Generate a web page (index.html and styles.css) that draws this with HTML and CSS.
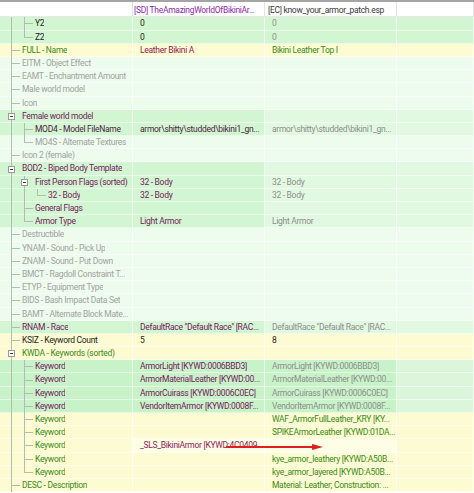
FILE: index.html
```html
<!DOCTYPE html>
<html>
<head>
<meta charset="utf-8">
<link rel="stylesheet" href="styles.css">
</head>
<body>
<div class="view">
  <div class="topbar"></div>
  <div class="head">
    <div class="c1"></div>
    <div class="c2 h-sd">[SD] TheAmazingWorldOfBikiniAr...</div>
    <div class="c3 h-ec">[EC] know_your_armor_patch.esp</div>
    <div class="c4"></div>
  </div>

  <div class="row g"><div class="c1"><span class="s v"></span><span class="o t"></span><span class="lbl k">Y2</span></div><div class="c2 k">0</div><div class="c3 gy">0</div><div class="c4"></div></div>
  <div class="row g"><div class="c1"><span class="s v"></span><span class="o l"></span><span class="lbl k">Z2</span></div><div class="c2 k">0</div><div class="c3 gy">0</div><div class="c4"></div></div>
  <div class="row y"><div class="c1"><span class="o t"></span><span class="lbl gr">FULL - Name</span></div><div class="c2 mr">Leather Bikini A</div><div class="c3 gr">Bikini Leather Top I</div><div class="c4"></div></div>
  <div class="row p"><div class="c1"><span class="o t"></span><span class="lbl gy">EITM - Object Effect</span></div><div class="c2"></div><div class="c3"></div><div class="c4"></div></div>
  <div class="row p"><div class="c1"><span class="o t"></span><span class="lbl gy">EAMT - Enchantment Amount</span></div><div class="c2"></div><div class="c3"></div><div class="c4"></div></div>
  <div class="row p"><div class="c1"><span class="o t"></span><span class="lbl gy">Male world model</span></div><div class="c2"></div><div class="c3"></div><div class="c4"></div></div>
  <div class="row p"><div class="c1"><span class="o t"></span><span class="lbl gy">Icon</span></div><div class="c2"></div><div class="c3"></div><div class="c4"></div></div>
  <div class="row g"><div class="c1"><span class="o x"><span class="box"></span></span><span class="lbl pu">Female world model</span></div><div class="c2"></div><div class="c3 lt"></div><div class="c4 lt"></div></div>
  <div class="row g"><div class="c1"><span class="s v"></span><span class="o t"></span><span class="lbl dp">MOD4 - Model FileName</span></div><div class="c2 dp">armor\shitty\studded\bikini1_gn...</div><div class="c3 lt gy">armor\shitty\studded\bikini1_gn...</div><div class="c4 lt"></div></div>
  <div class="row p"><div class="c1"><span class="s v"></span><span class="o l"></span><span class="lbl gy">MO4S - Alternate Textures</span></div><div class="c2"></div><div class="c3"></div><div class="c4"></div></div>
  <div class="row p"><div class="c1"><span class="o t"></span><span class="lbl gy">Icon 2 (female)</span></div><div class="c2"></div><div class="c3"></div><div class="c4"></div></div>
  <div class="row g"><div class="c1"><span class="o x"><span class="box"></span></span><span class="lbl pu">BOD2 - Biped Body Template</span></div><div class="c2"></div><div class="c3 lt"></div><div class="c4 lt"></div></div>
  <div class="row g"><div class="c1"><span class="s v"></span><span class="o x"><span class="box"></span></span><span class="lbl pu">First Person Flags (sorted)</span></div><div class="c2 pu">32 - Body</div><div class="c3 lt gy">32 - Body</div><div class="c4 lt"></div></div>
  <div class="row g"><div class="c1"><span class="s v"></span><span class="s v"></span><span class="o l"></span><span class="lbl pu">32 - Body</span></div><div class="c2 pu">32 - Body</div><div class="c3 lt gy">32 - Body</div><div class="c4 lt"></div></div>
  <div class="row g"><div class="c1"><span class="s v"></span><span class="o t"></span><span class="lbl pu">General Flags</span></div><div class="c2"></div><div class="c3 lt"></div><div class="c4 lt"></div></div>
  <div class="row g"><div class="c1"><span class="s v"></span><span class="o l"></span><span class="lbl pu">Armor Type</span></div><div class="c2 pu">Light Armor</div><div class="c3 lt gy">Light Armor</div><div class="c4 lt"></div></div>
  <div class="row p"><div class="c1"><span class="o t"></span><span class="lbl gy">Destructible</span></div><div class="c2"></div><div class="c3"></div><div class="c4"></div></div>
  <div class="row p"><div class="c1"><span class="o t"></span><span class="lbl gy">YNAM - Sound - Pick Up</span></div><div class="c2"></div><div class="c3"></div><div class="c4"></div></div>
  <div class="row p"><div class="c1"><span class="o t"></span><span class="lbl gy">ZNAM - Sound - Put Down</span></div><div class="c2"></div><div class="c3"></div><div class="c4"></div></div>
  <div class="row p"><div class="c1"><span class="o t"></span><span class="lbl gy">BMCT - Ragdoll Constraint T...</span></div><div class="c2"></div><div class="c3"></div><div class="c4"></div></div>
  <div class="row p"><div class="c1"><span class="o t"></span><span class="lbl gy">ETYP - Equipment Type</span></div><div class="c2"></div><div class="c3"></div><div class="c4"></div></div>
  <div class="row p"><div class="c1"><span class="o t"></span><span class="lbl gy">BIDS - Bash Impact Data Set</span></div><div class="c2"></div><div class="c3"></div><div class="c4"></div></div>
  <div class="row p"><div class="c1"><span class="o t"></span><span class="lbl gy">BAMT - Alternate Block Mate...</span></div><div class="c2"></div><div class="c3"></div><div class="c4"></div></div>
  <div class="row g"><div class="c1"><span class="o t"></span><span class="lbl pu">RNAM - Race</span></div><div class="c2 pu">DefaultRace "Default Race" [RAC...</div><div class="c3 lt gy">DefaultRace "Default Race" [RAC...</div><div class="c4 lt"></div></div>
  <div class="row y"><div class="c1"><span class="o t"></span><span class="lbl k">KSIZ - Keyword Count</span></div><div class="c2 k">5</div><div class="c3 k">8</div><div class="c4"></div></div>
  <div class="row y"><div class="c1"><span class="o x"><span class="box"></span></span><span class="lbl gr">KWDA - Keywords (sorted)</span></div><div class="c2"></div><div class="c3"></div><div class="c4"></div></div>
  <div class="row kg"><div class="c1"><span class="s v"></span><span class="o t"></span><span class="lbl pu">Keyword</span></div><div class="c2 pu">ArmorLight [KYWD:0006BBD3]</div><div class="c3 gy">ArmorLight [KYWD:0006BBD3]</div><div class="c4 lt"></div></div>
  <div class="row kg"><div class="c1"><span class="s v"></span><span class="o t"></span><span class="lbl pu">Keyword</span></div><div class="c2 pu">ArmorMaterialLeather [KYWD:00...</div><div class="c3 gy">ArmorMaterialLeather [KYWD:00...</div><div class="c4 lt"></div></div>
  <div class="row kg"><div class="c1"><span class="s v"></span><span class="o t"></span><span class="lbl pu">Keyword</span></div><div class="c2 pu">ArmorCuirass [KYWD:0006C0EC]</div><div class="c3 gy">ArmorCuirass [KYWD:0006C0EC]</div><div class="c4 lt"></div></div>
  <div class="row kg"><div class="c1"><span class="s v"></span><span class="o t"></span><span class="lbl pu">Keyword</span></div><div class="c2 pu">VendorItemArmor [KYWD:0008F...</div><div class="c3 gy">VendorItemArmor [KYWD:0008F...</div><div class="c4 lt"></div></div>
  <div class="row y"><div class="c1"><span class="s v"></span><span class="o t"></span><span class="lbl gr">Keyword</span></div><div class="c2"></div><div class="c3 gr">WAF_ArmorFullLeather_KRY [KY...</div><div class="c4"></div></div>
  <div class="row y"><div class="c1"><span class="s v"></span><span class="o t"></span><span class="lbl gr">Keyword</span></div><div class="c2"></div><div class="c3 gr">SPIKEArmorLeather [KYWD:01DA...</div><div class="c4"></div></div>
  <div class="row y"><div class="c1"><span class="s v"></span><span class="o t"></span><span class="lbl gr">Keyword</span></div><div class="c2 mr wy">_SLS_BikiniArmor [KYWD:4C0409...</div><div class="c3 wy"></div><div class="c4"></div></div>
  <div class="row y"><div class="c1"><span class="s v"></span><span class="o t"></span><span class="lbl gr">Keyword</span></div><div class="c2"></div><div class="c3 gr">kye_armor_leathery [KYWD:A50B...</div><div class="c4"></div></div>
  <div class="row y"><div class="c1"><span class="s v"></span><span class="o l"></span><span class="lbl gr">Keyword</span></div><div class="c2"></div><div class="c3 gr">kye_armor_layered [KYWD:A50B...</div><div class="c4"></div></div>
  <div class="row y"><div class="c1"><span class="o t"></span><span class="lbl gr">DESC - Description</span></div><div class="c2"></div><div class="c3 gr">Material: Leather; Construction: ...</div><div class="c4"></div></div>

  <svg class="arrow" width="100" height="10" viewBox="0 0 100 10">
    <line x1="0" y1="5" x2="88" y2="5" stroke="#e0201c" stroke-width="2"/>
    <polygon points="86,2 97,5 86,8" fill="#e0201c"/>
  </svg>
</div>
</body>
</html>
```

FILE: styles.css
```css
html, body {
  margin: 0;
  padding: 0;
  background: #ffffff;
}
body {
  width: 474px;
  height: 493px;
  overflow: hidden;
  font-family: Roboto, Lato, sans-serif;
  font-size: 8.5px;
  letter-spacing: -0.3px;
}
.view {
  position: relative;
  width: 474px;
}
.topbar {
  height: 2px;
  background: #a4a4a4;
}
.head {
  display: flex;
  height: 15.4px;
  line-height: 15px;
  background: #ffffff;
  border-bottom: 1px solid #e8e8e8;
  box-sizing: border-box;
}
.head > div {
  border-right: 1px solid #e3e3e3;
  box-sizing: border-box;
  white-space: nowrap;
  overflow: hidden;
  padding-top: 1px;
}
.head .c2 { padding-left: 1px; }
.head .c3 { padding-left: 3px; }
.h-sd { color: #8a2aa4; }
.h-ec { color: #3a3a3a; }

.row {
  display: flex;
  height: 13.2px;
  line-height: 13.2px;
  box-shadow: inset 0 -1px 0 rgba(255,255,255,0.55);
}
.row > div {
  box-sizing: border-box;
  border-right: 1px solid rgba(255,255,255,0.7);
  white-space: nowrap;
  overflow: hidden;
}
.c1 {
  width: 133px;
  flex: none;
  display: flex;
  align-items: stretch;
  padding-left: 5px;
}
.c2 { width: 132px; flex: none; padding-left: 7px; }
.c3 { width: 132px; flex: none; padding-left: 7px; }
.c4 { flex: 1; }

.row.g { background: #d2f6d2; }
.row.kg { background: #c8f2c8; }
.row.p { background: #edfced; }
.row.y { background: #fdfbd2; }
.row .lt { background: rgba(255,255,255,0.35); }
.row .wy { background: rgba(255,255,255,0.45); }

/* tree guides */
.s {
  width: 13px;
  flex: none;
}
.o {
  width: 15px;
  flex: none;
  margin-right: 2px;
  display: flex;
  align-items: center;
}
.v {
  background: linear-gradient(#b3bcb3, #b3bcb3) no-repeat 6px 0 / 1px 100%;
}
.t {
  background:
    linear-gradient(#b3bcb3, #b3bcb3) no-repeat 6px 0 / 1px 100%,
    linear-gradient(#b3bcb3, #b3bcb3) no-repeat 6px 50% / 9px 1px;
}
.l {
  background:
    linear-gradient(#b3bcb3, #b3bcb3) no-repeat 6px 0 / 1px 50%,
    linear-gradient(#b3bcb3, #b3bcb3) no-repeat 6px 50% / 9px 1px;
}
.x {
  background: linear-gradient(#b3bcb3, #b3bcb3) no-repeat 6px 0 / 1px 100%;
}
.box {
  display: block;
  width: 7px;
  height: 7px;
  margin-left: 3px;
  box-sizing: border-box;
  border: 1px solid #9a9a9a;
  background:
    linear-gradient(#404040, #404040) no-repeat 1px 2px / 3px 1px,
    #ffffff;
}
.lbl {
  white-space: nowrap;
  min-width: 0;
  overflow: hidden;
}

/* text colours */
.k { color: #1e1e1e; }
.gy { color: #a2a2a2; }
.row .c3.gy { color: #8e8e8e; }
.gr { color: #3b8a1c; }
.pu { color: #76205f; }
.dp { color: #4f1d45; }
.mr { color: #8c1a55; }

.arrow {
  position: absolute;
  left: 226px;
  top: 442px;
}
```
